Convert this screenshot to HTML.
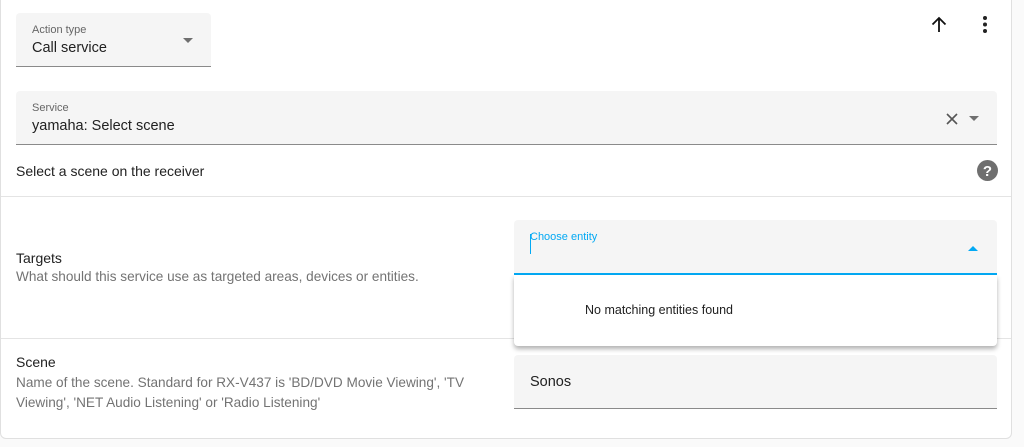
<!DOCTYPE html>
<html><head><style>
body{margin:0;width:1024px;height:447px;background:#fafafa;font-family:"Liberation Sans",Roboto,sans-serif;position:relative;overflow:hidden;color:#212121}
.card{position:absolute;left:0;top:-10px;width:1012px;height:449px;background:#fff;border:1px solid #e0e0e0;border-radius:0 0 6px 6px;box-sizing:border-box}
.abs{position:absolute}
.field{position:absolute;background:#f5f5f5;border-radius:4px 4px 0 0;border-bottom:1px solid #8a8a8a;box-sizing:border-box}
.lbl{position:absolute;font-size:11px;color:#666}
.val{position:absolute;font-size:14.5px;color:#212121}
.tri{position:absolute;width:0;height:0;border-left:5px solid transparent;border-right:5px solid transparent;border-top:5px solid #6f6f6f}
.hr{position:absolute;left:1px;width:1010px;height:1px;background:#e4e4e4}
</style></head><body>
<div class="card"></div>
<div class="field" style="left:16px;top:13px;width:195px;height:54px">
 <div class="lbl" style="left:16px;top:11px">Action type</div>
 <div class="val" style="left:16px;top:27px">Call service</div>
 <div class="tri" style="left:167px;top:25px"></div>
</div>
<svg class="abs" style="left:929px;top:15px" width="20" height="20" viewBox="0 0 20 20"><path d="M10 17V3M3.5 9.5L10 3l6.5 6.5" stroke="#111" stroke-width="1.8" fill="none"/></svg>
<svg class="abs" style="left:980px;top:15px" width="10" height="20"><circle cx="5" cy="3" r="2" fill="#222"/><circle cx="5" cy="9.5" r="2" fill="#222"/><circle cx="5" cy="16" r="2" fill="#222"/></svg>
<div class="field" style="left:16px;top:91px;width:981px;height:54px">
 <div class="lbl" style="left:16px;top:11px">Service</div>
 <div class="val" style="left:16px;top:27px">yamaha: Select scene</div>
 <svg class="abs" style="left:930px;top:22px" width="12" height="12"><path d="M1 1L11 11M11 1L1 11" stroke="#555" stroke-width="1.6"/></svg>
 <div class="tri" style="left:953px;top:25px"></div>
</div>
<div class="val" style="left:16px;top:163px;font-size:14px">Select a scene on the receiver</div>
<svg class="abs" style="left:977px;top:160px" width="21" height="21"><circle cx="10.5" cy="10.5" r="10.5" fill="#6f6f6f"/><text x="10.5" y="16" text-anchor="middle" font-family="Liberation Sans" font-weight="bold" font-size="15" fill="#fff">?</text></svg>
<div class="hr" style="top:196px"></div>
<div class="val" style="left:16px;top:250px;font-size:14px">Targets</div>
<div class="abs" style="left:16px;top:269px;font-size:13.6px;color:#737373">What should this service use as targeted areas, devices or entities.</div>
<div class="hr" style="top:338px"></div>
<div class="field" style="left:514px;top:220px;width:483px;height:55px;border-bottom:2px solid #03a9f4">
 <div class="lbl" style="left:16px;top:11px;color:#03a9f4">Choose entity</div>
 <div class="abs" style="left:16px;top:14px;width:1px;height:20px;background:#03a9f4"></div>
 <div class="tri" style="left:454px;top:26px;border-top:none;border-bottom:5px solid #03a9f4"></div>
</div>
<div class="abs" style="left:514px;top:275px;width:483px;height:71px;background:#fff;border-radius:0 0 4px 4px;box-shadow:0 3px 5px rgba(0,0,0,0.3)">
 <div class="abs" style="left:71px;top:28px;font-size:12.5px">No matching entities found</div>
</div>
<div class="val" style="left:16px;top:354px;font-size:14px">Scene</div>
<div class="abs" style="left:16px;top:373px;font-size:13.6px;color:#737373;line-height:20px;width:470px">Name of the scene. Standard for RX-V437 is 'BD/DVD Movie Viewing', 'TV Viewing', 'NET Audio Listening' or 'Radio Listening'</div>
<div class="field" style="left:514px;top:355px;width:483px;height:54px">
 <div class="val" style="left:16px;top:19px">Sonos</div>
</div>
</body></html>
